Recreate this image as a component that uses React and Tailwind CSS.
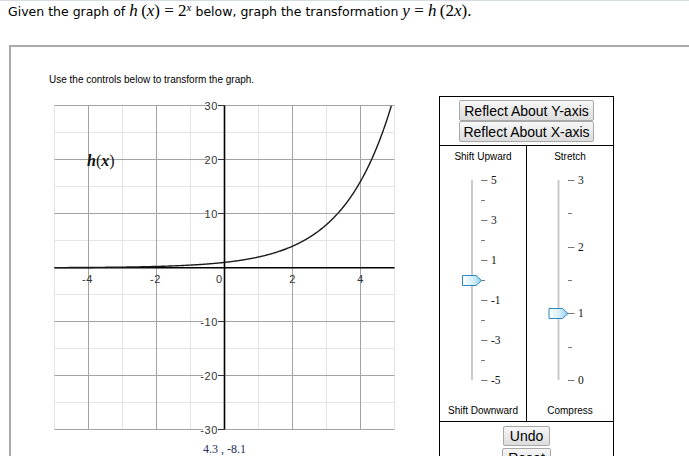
import React from 'react';

// graph coordinates (svg space, svg placed at screen x=40, y=96)
const X0 = 184.5;
const SX = 34;
const Y0 = 171.8;
const SY = 5.4;
const gx = (x) => X0 + SX * x;
const gy = (y) => Y0 - SY * y;
const crisp = (v) => Math.round(v - 0.5) + 0.5;
const tickFont = "'Liberation Sans', Arial, sans-serif";

const curvePoints = () => {
  const pts = [];
  const end = Math.log2(30);
  for (let x = -5; x < end; x += 0.02) pts.push(`${gx(x).toFixed(2)},${gy(2 ** x).toFixed(2)}`);
  pts.push(`${gx(end).toFixed(2)},${gy(30).toFixed(2)}`);
  return pts.join(' ');
};

function Graph() {
  const xs = [-5, -4, -3, -2, -1, 1, 2, 3, 4, 5];
  const ys = [30, 25, 20, 15, 10, 5, -5, -10, -15, -20, -25, -30];
  const left = gx(-5);
  const right = gx(5);
  const top = crisp(gy(30));
  const bottom = crisp(gy(-30));

  return (
    <svg width="399" height="360" className="ml-[29px] shrink-0 block">
      {/* minor grid */}
      {xs.filter((x) => x % 2 !== 0).map((x) => (
        <line key={'mx' + x} x1={gx(x)} x2={gx(x)} y1={top} y2={bottom} stroke="#e4e4e4" strokeWidth="1" />
      ))}
      {ys.filter((y) => y % 10 !== 0).map((y) => (
        <line key={'my' + y} x1={left} x2={right} y1={crisp(gy(y))} y2={crisp(gy(y))} stroke="#e4e4e4" strokeWidth="1" />
      ))}
      {/* major grid */}
      {xs.filter((x) => x % 2 === 0).map((x) => (
        <line key={'Mx' + x} x1={gx(x)} x2={gx(x)} y1={top} y2={bottom} stroke="#a3a3a3" strokeWidth="1" />
      ))}
      {ys.filter((y) => y % 10 === 0).map((y) => (
        <line key={'My' + y} x1={left} x2={right} y1={crisp(gy(y))} y2={crisp(gy(y))} stroke="#a3a3a3" strokeWidth="1" />
      ))}
      {/* axes */}
      <line x1={left} x2={right} y1={gy(0)} y2={gy(0)} stroke="#000" strokeWidth="1.6" />
      <line x1={X0} x2={X0} y1={top} y2={bottom} stroke="#000" strokeWidth="1.6" />

      {/* curve */}
      <polyline points={curvePoints()} fill="none" stroke="#1a1a1a" strokeWidth="1.4" />

      {/* y ticks + labels */}
      {[30, 20, 10, -10, -20, -30].map((y) => (
        <g key={'ly' + y}>
          <rect x={y < 0 ? 163 : 168} y={gy(y) - 5} width={y < 0 ? 16 : 11} height={10} fill="#fff" />
          <line x1={178} x2={X0} y1={crisp(gy(y))} y2={crisp(gy(y))} stroke="#333" strokeWidth="1" />
          <text x={178} y={gy(y) + 4} textAnchor="end" fontFamily={tickFont} fontSize="11" letterSpacing="0.6" fill="#333">
            {y}
          </text>
        </g>
      ))}
      {/* x labels */}
      {[-4, -2, 2, 4].map((x) => (
        <text key={'lx' + x} x={gx(x) + (x < 0 ? -1 : 0)} y={gy(0) + 15} textAnchor="middle" fontFamily={tickFont} fontSize="11" letterSpacing="0.6" fill="#333">
          {x}
        </text>
      ))}
      <text x={182} y={gy(0) + 15} textAnchor="end" fontFamily={tickFont} fontSize="11" fill="#333">
        0
      </text>

      {/* function label */}
      <text x={47} y={70} fontFamily="'Liberation Serif', serif" fontSize="16" fill="#111">
        <tspan fontStyle="italic" fontWeight="bold">h</tspan>
        <tspan>(</tspan>
        <tspan fontStyle="italic" fontWeight="bold">x</tspan>
        <tspan>)</tspan>
      </text>

      {/* cursor coords */}
      <text x={X0} y={357} textAnchor="middle" fontFamily="'Liberation Serif', serif" fontSize="12" fill="#22305a">
        4.3 , -8.1
      </text>
    </svg>
  );
}

function Thumb({ x, y }) {
  return (
    <path
      d={`M${x} ${y - 5} H${x + 13.5} L${x + 19} ${y} L${x + 13.5} ${y + 5} H${x} Z`}
      fill="url(#thumbGrad)"
      stroke="#2b88c6"
      strokeWidth="1"
    />
  );
}

function Slider({ ticks, trackX, thumbY }) {
  return (
    <svg width="86" height="237" className="block">
      <defs>
        <linearGradient id="thumbGrad" x1="0" y1="0" x2="1" y2="0">
          <stop offset="0" stopColor="#ffffff" />
          <stop offset="0.55" stopColor="#d6eefa" />
          <stop offset="1" stopColor="#92d0f0" />
        </linearGradient>
      </defs>
      <line x1={trackX} x2={trackX} y1={17} y2={217} stroke="#c4c4c4" strokeWidth="1.8" />
      {ticks.map((t) => (
        <g key={t.y}>
          <line x1={41} x2={t.label ? 47.5 : 45} y1={t.y + 0.5} y2={t.y + 0.5} stroke="#777" strokeWidth="1" />
          {t.label && (
            <text x={51} y={t.y + 4} fontFamily="'Liberation Serif', serif" fontSize="11.5" fill="#111">
              {t.label}
            </text>
          )}
        </g>
      ))}
      <Thumb x={trackX - 9.5} y={thumbY} />
    </svg>
  );
}

const shiftTicks = [5, 4, 3, 2, 1, 0, -1, -2, -3, -4, -5].map((v) => ({
  y: 117 - 20 * v,
  label: v % 2 !== 0 ? String(v) : null,
}));

const stretchTicks = [3, 2.5, 2, 1.5, 1, 0.5, 0].map((v) => ({
  y: Math.round(217 - 66.67 * v),
  label: Number.isInteger(v) ? String(v) : null,
}));

const btn =
  'block mx-auto border border-[#a8a8a8] rounded-[2px] bg-gradient-to-b from-[#f7f7f7] to-[#dcdcdc] text-[14px] leading-[18px] text-black';

function Panel() {
  return (
    <div className="w-[175px] h-[400px] shrink-0 border border-black font-['Liberation_Sans',Arial,sans-serif]">
      <div className="h-[49px] pt-[3px] border-b border-black">
        <button className={btn + ' w-[135px] h-[21px]'}>Reflect About Y-axis</button>
        <button className={btn + ' w-[135px] h-[21px]'}>Reflect About X-axis</button>
      </div>
      <div className="flex h-[276px] border-b border-black">
        <div className="w-[87px] border-r border-black flex flex-col items-center">
          <p className="pt-[5px] text-[10px] leading-[12px] text-black">Shift Upward</p>
          <div className="self-start">
            <Slider ticks={shiftTicks} trackX={32} thumbY={117.5} />
          </div>
          <p className="mt-[5px] text-[10px] leading-[12px] text-black">Shift Downward</p>
        </div>
        <div className="w-[86px] flex flex-col items-center">
          <p className="pt-[5px] text-[10px] leading-[12px] text-black">Stretch</p>
          <div className="self-start">
            <Slider ticks={stretchTicks} trackX={31.5} thumbY={150.5} />
          </div>
          <p className="mt-[5px] text-[10px] leading-[12px] text-black">Compress</p>
        </div>
      </div>
      <div className="pt-[4px]">
        <button className={btn + ' w-[47px] h-[20px]'}>Undo</button>
        <button className={btn + ' w-[49px] h-[20px] mt-[2px]'}>Reset</button>
      </div>
    </div>
  );
}

export default function App() {
  return (
    <div className="w-[689px] h-[456px] overflow-hidden bg-white border-t border-[#d5dce3] text-black">
      <div className="h-[44px] pl-2 pt-0 leading-[20px] text-[12.5px] whitespace-nowrap font-['DejaVu_Sans',Verdana,sans-serif]">
        Given the graph of{' '}
        <span className="font-['Liberation_Serif',serif] text-[17px]">
          <i>h</i>&#8201;(<i>x</i>) = 2<sup className="italic text-[11px]">x</sup>
        </span>{' '}
        below, graph the transformation{' '}
        <span className="font-['Liberation_Serif',serif] text-[17px]">
          <i>y</i> = <i>h</i>&#8201;(2<i>x</i>).
        </span>
      </div>
      <div className="ml-[9px] w-[720px] h-[460px] border-2 border-[#aaaaaa]">
        <p className="pl-[38px] pt-[27px] text-[10px] leading-[12px] font-['Liberation_Sans',Arial,sans-serif]">
          Use the controls below to transform the graph.
        </p>
        <div className="flex mt-[10px]">
          <Graph />
          <Panel />
        </div>
      </div>
    </div>
  );
}
